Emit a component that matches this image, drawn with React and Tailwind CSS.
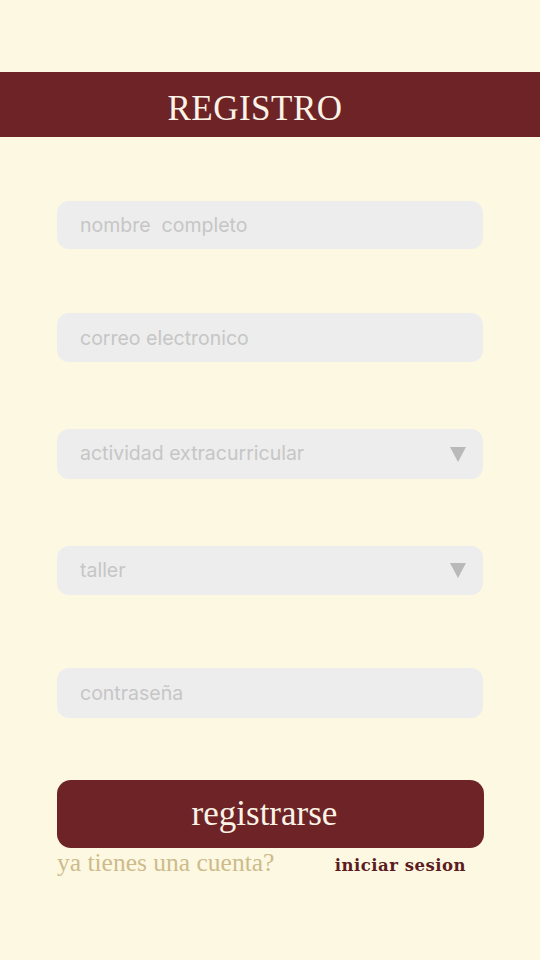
import React from 'react';

const slab = "font-['Liberation_Serif',serif]";

function TextField({ placeholder, type = 'text', className = '' }) {
  return (
    <input
      type={type}
      placeholder={placeholder}
      className={`w-full rounded-xl bg-[#ededed] px-[23px] font-['Inter',sans-serif] text-[19.5px] text-gray-700 placeholder:text-[#c6c6c6] focus:outline-none ${className}`}
    />
  );
}

function SelectField({ label, className = '' }) {
  return (
    <button
      type="button"
      className={`flex w-full items-center justify-between rounded-xl bg-[#ededed] pl-[23px] pr-[17px] font-['Inter',sans-serif] text-[19.5px] text-[#c6c6c6] ${className}`}
    >
      <span>{label}</span>
      <svg width="16" height="15" viewBox="0 0 16 15">
        <polygon points="0,0 16,0 8,15" fill="#b9b9b9" />
      </svg>
    </button>
  );
}

export default function App() {
  return (
    <div className="min-h-screen bg-[#fdf8e1] pt-[72px]">
      {/* Header */}
      <div className="flex h-[65px] items-center justify-center bg-[#6e2426] pr-[30px] pt-[10px]">
        <h1 className={`${slab} text-[35px] tracking-[0.5px] text-[#fbf3e6]`}>REGISTRO</h1>
      </div>

      {/* Form */}
      <form className="flex flex-col px-[57px]" onSubmit={(e) => e.preventDefault()}>
        <TextField placeholder="nombre  completo" className="mt-[64px] h-[48px]" />
        <TextField type="email" placeholder="correo electronico" className="mt-[64px] h-[49px]" />
        <SelectField label="actividad extracurricular" className="mt-[67px] h-[50px]" />
        <SelectField label="taller" className="mt-[67px] h-[49px]" />
        <TextField type="password" placeholder="contraseña" className="mt-[73px] h-[50px]" />

        <button
          type="submit"
          className={`${slab} mt-[62px] h-[68px] w-[427px] rounded-[14px] bg-[#6e2426] pr-[12px] text-[35px] text-[#fbf3e6]`}
        >
          registrarse
        </button>

        <div className="mt-[2px] flex items-baseline justify-between pr-[17px] leading-none">
          <span className={`${slab} text-[25.5px] text-[#cdbb8c]`}>ya tienes una cuenta?</span>
          <a href="#" className="font-['DejaVu_Serif',serif] text-[16.5px] font-bold tracking-[0.5px] text-[#5c1b1e]">
            iniciar sesion
          </a>
        </div>
      </form>
    </div>
  );
}
